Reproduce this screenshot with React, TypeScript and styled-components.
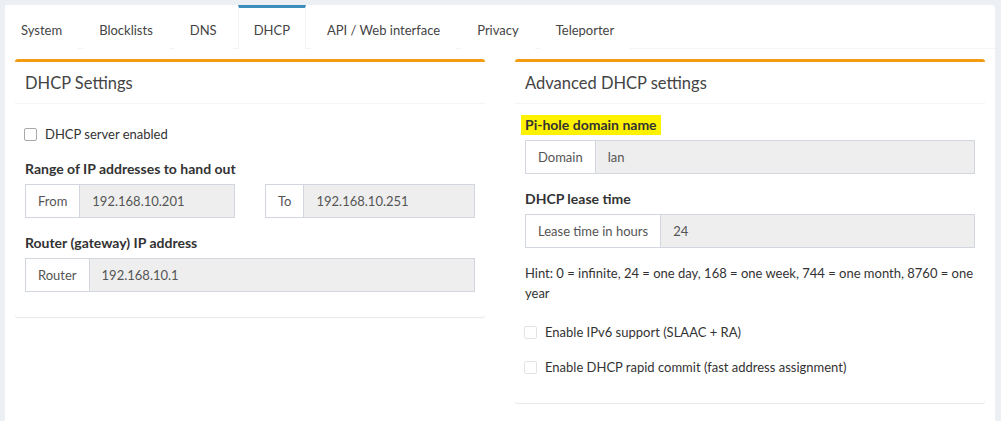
import React from "react";
import styled, { createGlobalStyle } from "styled-components";

const GlobalStyle = createGlobalStyle`
  html, body {
    margin: 0;
    padding: 0;
    background: #ecf0f5;
    font-family: "Lato", "Noto Sans", sans-serif;
    font-size: 13px;
    color: #333;
  }
`;

const tabs = ["System", "Blocklists", "DNS", "DHCP", "API / Web interface", "Privacy", "Teleporter"];

const App = () => {
  return (
    <>
      <GlobalStyle />
      <Page>
        <TabCard>
          <TabBar>
            {tabs.map((t) => (
              <Tab key={t} active={t === "DHCP"}>
                {t}
              </Tab>
            ))}
          </TabBar>

          <TabContent>
            <Box>
              <BoxHeader>
                <BoxTitle>DHCP Settings</BoxTitle>
              </BoxHeader>
              <BoxBody>
                <CheckRow top={20}>
                  <Check />
                  <CheckLabel>DHCP server enabled</CheckLabel>
                </CheckRow>

                <Label>Range of IP addresses to hand out</Label>
                <Split>
                  <InputGroup>
                    <Addon>From</Addon>
                    <Field>192.168.10.201</Field>
                  </InputGroup>
                  <InputGroup>
                    <Addon>To</Addon>
                    <Field>192.168.10.251</Field>
                  </InputGroup>
                </Split>

                <Label>Router (gateway) IP address</Label>
                <InputGroup>
                  <Addon>Router</Addon>
                  <Field>192.168.10.1</Field>
                </InputGroup>
                <Spacer h={15} />
              </BoxBody>
            </Box>

            <Box>
              <BoxHeader>
                <BoxTitle>Advanced DHCP settings</BoxTitle>
              </BoxHeader>
              <BoxBody>
                <Label first>
                  <Highlight>Pi-hole domain name</Highlight>
                </Label>
                <InputGroup>
                  <Addon>Domain</Addon>
                  <Field>lan</Field>
                </InputGroup>

                <Label>DHCP lease time</Label>
                <InputGroup>
                  <Addon>Lease time in hours</Addon>
                  <Field>24</Field>
                </InputGroup>

                <Hint>
                  Hint: 0 = infinite, 24 = one day, 168 = one week, 744 = one month, 8760 = one year
                </Hint>

                <CheckRow top={19}>
                  <Check disabled />
                  <CheckLabel>Enable IPv6 support (SLAAC + RA)</CheckLabel>
                </CheckRow>
                <CheckRow top={15}>
                  <Check disabled />
                  <CheckLabel>Enable DHCP rapid commit (fast address assignment)</CheckLabel>
                </CheckRow>
                <Spacer h={16} />
              </BoxBody>
            </Box>
          </TabContent>
        </TabCard>
      </Page>
    </>
  );
};

export default App;

const Page = styled.div`
  padding: 5px 6px 0 5px;
  height: 421px;
  box-sizing: border-box;
  overflow: hidden;
`;

const TabCard = styled.div`
  background: #fff;
  border-radius: 3px 3px 0 0;
  height: 100%;
`;

const TabBar = styled.div`
  display: flex;
  height: 43px;
  border-bottom: 1px solid #f4f4f4;
`;

const Tab = styled.div<{ active?: boolean }>`
  display: flex;
  align-items: center;
  box-sizing: border-box;
  padding: 3px 15px 0;
  margin: 0 5px -1px 0;
  color: #444;
  font-size: 13px;
  background: #fff;
  border-top: 3px solid ${(p) => (p.active ? "#3c8dbc" : "transparent")};
  border-left: 1px solid ${(p) => (p.active ? "#f4f4f4" : "transparent")};
  border-right: 1px solid ${(p) => (p.active ? "#f4f4f4" : "transparent")};
`;

const TabContent = styled.div`
  display: grid;
  grid-template-columns: 470px 470px;
  column-gap: 30px;
  align-items: start;
  padding: 10px;
`;

const Box = styled.div`
  background: #fff;
  border-top: 3px solid #f39c12;
  border-radius: 3px;
  box-shadow: 0 1px 1px rgba(0, 0, 0, 0.1);
`;

const BoxHeader = styled.div`
  height: 41px;
  display: flex;
  align-items: center;
  padding: 0 10px;
  border-bottom: 1px solid #f4f4f4;
`;

const BoxTitle = styled.h3`
  margin: 0;
  font-size: 16.5px;
  font-weight: 400;
  color: #444;
`;

const BoxBody = styled.div`
  padding: 0 10px 10px;
`;

const CheckRow = styled.div<{ top: number }>`
  display: flex;
  align-items: center;
  margin-top: ${(p) => p.top}px;
  height: 20px;
`;

const Check = styled.span<{ disabled?: boolean }>`
  width: 11px;
  height: 11px;
  border: 1px solid ${(p) => (p.disabled ? "#e3e3e3" : "#a9a9a9")};
  border-radius: 2px;
  margin: 0 8px 0 -1px;
  flex: none;
`;

const CheckLabel = styled.span`
  color: #333;
`;

const Label = styled.div<{ first?: boolean }>`
  font-size: 14px;
  font-weight: 700;
  color: #333;
  margin-top: ${(p) => (p.first ? "11px" : "15px")};
  margin-bottom: 5px;
  line-height: 20px;
`;

const Highlight = styled.span`
  display: inline-block;
  background: #fff200;
  padding: 0 4px;
  margin-left: -4px;
`;

const Split = styled.div`
  display: grid;
  grid-template-columns: 210px 210px;
  column-gap: 30px;
`;

const InputGroup = styled.div`
  display: flex;
  height: 34px;
  border: 1px solid #d2d6de;
  box-sizing: border-box;
`;

const Addon = styled.div`
  display: flex;
  align-items: center;
  padding: 0 12px;
  background: #fff;
  color: #555;
  border-right: 1px solid #d2d6de;
`;

const Field = styled.div`
  flex: 1;
  display: flex;
  align-items: center;
  padding: 0 12px;
  background: #eee;
  color: #555;
`;

const Hint = styled.p`
  margin: 15px 0 0;
  line-height: 20px;
  color: #333;
`;

const Spacer = styled.div<{ h: number }>`
  height: ${(p) => p.h}px;
`;
